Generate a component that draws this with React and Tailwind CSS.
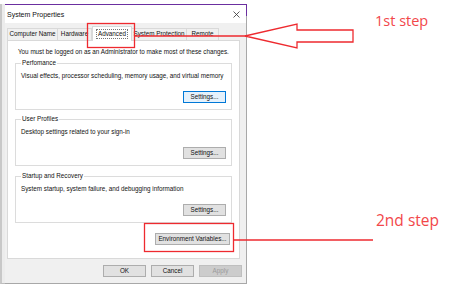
import React from "react";

const dlgFont = { fontFamily: '"Liberation Sans", Arial, sans-serif' };

function Btn({ children, className = "", disabled = false, focused = false }) {
  return (
    <div
      className={
        "flex items-center justify-center h-[12px] text-[6.3px] leading-none border " +
        (disabled
          ? "bg-[#cccccc] border-[#bfbfbf] text-[#9a9a9a] "
          : focused
          ? "bg-[#e5f1fb] border-[#0078d7] text-[#111] "
          : "bg-[#e1e1e1] border-[#adadad] text-[#111] ") +
        className
      }
    >
      {children}
    </div>
  );
}

function Group({ label, desc, focused, className = "" }) {
  return (
    <div className={"relative border border-[#dcdcdc] mx-[7px] h-[47px] flex flex-col " + className}>
      <span className="absolute left-[5px] top-[-4px] bg-white px-[1px] text-[6.3px] leading-none text-[#111]">
        {label}
      </span>
      <div className="pl-[5px] pt-[9px] text-[6.3px] leading-none text-[#111]">{desc}</div>
      <div className="flex justify-end pr-[5px] mt-auto mb-[6px]">
        <Btn focused={focused} className="w-[43px]">Settings...</Btn>
      </div>
    </div>
  );
}

export default function App() {
  return (
    <div className="relative w-[461px] h-[294px] bg-white overflow-hidden flex" style={dlgFont}>
      {/* window behind, left edge */}
      <div className="mt-[4px] h-[280px] w-[5px] bg-[#ececec] border-l-2 border-[#c8c8c8] border-b border-b-[#bdbdbd]" />

      {/* System Properties window */}
      <div className="mt-[4px] w-[242px] h-[280px] flex flex-col border-t border-t-[#6b2fa0] border-r border-r-[#a8a8a8] border-b border-b-[#a8a8a8] bg-[#f0f0f0] relative">
        <div className="absolute right-[-1px] top-[-1px] w-[1px] h-[12px] bg-[#6b2fa0]" />
        {/* title bar */}
        <div className="h-[18px] bg-white flex items-center justify-between pl-[2px] pr-[6px]">
          <span className="text-[7px] leading-none text-[#111]">System Properties</span>
          <svg width="7" height="7" viewBox="0 0 7 7">
            <path d="M0.5 0.5 L6.5 6.5 M6.5 0.5 L0.5 6.5" stroke="#333" strokeWidth="0.8" />
          </svg>
        </div>
        {/* tabs */}
        <div className="h-[17px] flex items-end pl-[2px] text-[6.3px] leading-none text-[#111]">
          <div className="h-[12px] w-[51px] flex items-center justify-center border border-[#d9d9d9] border-b-0 bg-[#f0f0f0]">Computer Name</div>
          <div className="h-[12px] w-[34px] flex items-center justify-center border border-l-0 border-[#d9d9d9] border-b-0 bg-[#f0f0f0]">Hardware</div>
          <div className="h-[15px] w-[40px] mb-[-1px] z-10 flex items-center justify-center border border-[#d9d9d9] border-b-0 bg-white">
            <span className="border border-dotted border-[#777] px-[1px] py-[1px]">Advanced</span>
          </div>
          <div className="h-[12px] w-[55px] flex items-center justify-center border border-l-0 border-[#d9d9d9] border-b-0 bg-[#f0f0f0]">System Protection</div>
          <div className="h-[12px] w-[32px] flex items-center justify-center border border-l-0 border-[#d9d9d9] border-b-0 bg-[#f0f0f0]">Remote</div>
        </div>
        {/* panel */}
        <div className="ml-[2px] w-[233px] h-[219px] bg-white border border-[#d9d9d9] flex flex-col">
          <div className="pl-[10px] pt-[8px] text-[6.3px] leading-none text-[#111]">
            You must be logged on as an Administrator to make most of these changes.
          </div>
          <Group
            className="mt-[8px]"
            label="Perfomance"
            desc="Visual effects, processor scheduling, memory usage, and virtual memory"
            focused
          />
          <Group className="mt-[9px] h-[45px]" label="User Profiles" desc="Desktop settings related to your sign-in" />
          <Group
            className="mt-[10px] h-[46px]"
            label="Startup and Recovery"
            desc="System startup, system failure, and debugging information"
          />
          <div className="flex justify-end pr-[9px] mt-[10px]">
            <Btn className="w-[75px]">Environment Variables...</Btn>
          </div>
        </div>
        {/* bottom buttons */}
        <div className="flex justify-end gap-[5px] pr-[4px] mt-[6px]">
          <Btn className="w-[43px]">OK</Btn>
          <Btn className="w-[43px]">Cancel</Btn>
          <Btn className="w-[43px]" disabled>Apply</Btn>
        </div>
      </div>

      {/* annotations */}
      <svg className="absolute left-0 top-0 pointer-events-none" width="461" height="294" viewBox="0 0 461 294">
        <rect x="87.5" y="23.5" width="47" height="24" fill="none" stroke="#ee2a2f" strokeWidth="1.3" />
        <line x1="134" y1="36" x2="246" y2="36" stroke="#ee2a2f" strokeWidth="1.3" />
        <polygon
          points="245,36 297,24 297,30 353,30 353,42 297,42 297,48"
          fill="white"
          stroke="#ee2a2f"
          strokeWidth="1.3"
        />
        <rect x="144.5" y="223.5" width="89" height="28" fill="none" stroke="#ee2a2f" strokeWidth="1.3" />
        <line x1="234" y1="240" x2="373" y2="240" stroke="#ee2a2f" strokeWidth="1.3" />
      </svg>
      <span
        className="absolute left-[375px] top-[14px] text-[14.5px] leading-none text-[#f2474a]"
        style={{ fontFamily: '"Open Sans", sans-serif' }}
      >
        1st step
      </span>
      <span
        className="absolute left-[376px] top-[213px] text-[15.5px] leading-none text-[#f2474a]"
        style={{ fontFamily: '"Open Sans", sans-serif' }}
      >
        2nd step
      </span>
    </div>
  );
}
